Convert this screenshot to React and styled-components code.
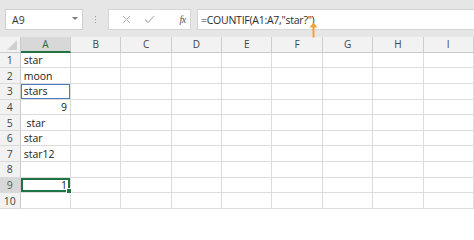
import React from 'react';
import styled, { createGlobalStyle } from 'styled-components';

const GlobalStyle = createGlobalStyle`
  html, body {
    margin: 0;
    padding: 0;
    background: #ffffff;
  }
  body {
    width: 474px;
    height: 209px;
    overflow: hidden;
    font-family: "Open Sans", "Noto Sans", Arial, sans-serif;
  }
`;

const COL_W = 50.37;
const ROW_H = 15.63;

const Window = styled.div`
  width: 474px;
  height: 209px;
  display: flex;
  flex-direction: column;
  overflow: hidden;
  position: relative;
`;

const Toolbar = styled.div`
  height: 37px;
  box-sizing: border-box;
  background: #e6e6e6;
  padding: 9px 0 7px 5px;
  display: flex;
  align-items: stretch;
`;

const NameBox = styled.div`
  width: 78px;
  box-sizing: border-box;
  background: #ffffff;
  border: 1px solid #cfcfcf;
  display: flex;
  align-items: center;
  justify-content: space-between;
  padding: 0 4px 0 6px;
  font-size: 10.5px;
  color: #333;
`;

const Caret = styled.span`
  width: 0;
  height: 0;
  border-left: 3px solid transparent;
  border-right: 3px solid transparent;
  border-top: 3px solid #7a7a7a;
  margin-bottom: 2px;
`;

const Grip = styled.div`
  width: 25px;
  display: flex;
  flex-direction: column;
  align-items: center;
  justify-content: center;
  gap: 2px;
`;

const GripDot = styled.span`
  width: 1px;
  height: 1px;
  background: #9a9a9a;
`;

const ButtonBox = styled.div`
  width: 83px;
  box-sizing: border-box;
  background: #ffffff;
  border: 1px solid #d6d6d6;
  display: flex;
  align-items: center;
  padding: 0 4px 0 9px;
`;

const BarButton = styled.span`
  width: ${p => p.w}px;
  display: flex;
  align-items: center;
  justify-content: center;
`;

const Fx = styled.span`
  margin-left: auto;
  font-family: "Liberation Serif", "DejaVu Serif", serif;
  font-style: italic;
  font-size: 10px;
  color: #555;
  letter-spacing: -0.3px;
`;

const FormulaInput = styled.div`
  flex: 1;
  margin-left: 6px;
  box-sizing: border-box;
  background: #ffffff;
  border: 1px solid #d6d6d6;
  border-right: none;
  display: flex;
  align-items: center;
  padding-left: 3px;
  font-size: 10.5px;
  letter-spacing: -0.25px;
  color: #2b2b2b;
  white-space: nowrap;
`;

const Sheet = styled.div`
  display: grid;
  grid-template-columns: 20.7px repeat(9, ${COL_W}px);
  grid-template-rows: 15.7px repeat(10, ${ROW_H}px);
  background: #ffffff;
`;

const Corner = styled.div`
  background: #f2f2f2;
  border-right: 1px solid #c9c9c9;
  border-bottom: 1px solid #c9c9c9;
  box-sizing: border-box;
  position: relative;
  &::after {
    content: '';
    position: absolute;
    right: 3px;
    bottom: 2px;
    width: 0;
    height: 0;
    border-left: 10px solid transparent;
    border-bottom: 10px solid #d0d0d0;
  }
`;

const ColHead = styled.div`
  box-sizing: border-box;
  background: ${p => (p.active ? '#d8d8d8' : '#f2f2f2')};
  border-right: 1px solid #cdcdcd;
  border-bottom: ${p => (p.active ? '2px solid #217346' : '1px solid #c9c9c9')};
  color: ${p => (p.active ? '#2f6447' : '#444')};
  font-size: 10px;
  display: flex;
  align-items: center;
  justify-content: center;
  padding-top: ${p => (p.active ? '1px' : '0')};
`;

const RowHead = styled.div`
  box-sizing: border-box;
  background: ${p => (p.active ? '#d8d8d8' : '#f2f2f2')};
  border-right: 1px solid #c9c9c9;
  border-bottom: 1px solid #dadada;
  color: ${p => (p.active ? '#4f5f55' : '#444')};
  font-size: 10.5px;
  display: flex;
  align-items: center;
  justify-content: center;
`;

const Cell = styled.div`
  box-sizing: border-box;
  border-right: 1px solid #dcdcdc;
  border-bottom: 1px solid #dcdcdc;
  font-size: 10.5px;
  color: #222;
  display: flex;
  align-items: center;
  justify-content: ${p => (p.num ? 'flex-end' : 'flex-start')};
  padding: 0 3px;
  white-space: pre;
  position: relative;
  box-shadow: ${p =>
    p.selected
      ? 'inset 0 0 0 2px #217346'
      : p.traced
      ? 'inset 0 0 0 1px #4f79c4'
      : 'none'};
`;

const FillHandle = styled.span`
  position: absolute;
  right: -2px;
  bottom: -2px;
  width: 4px;
  height: 4px;
  background: #217346;
  border: 1px solid #ffffff;
  z-index: 2;
`;

const ArrowMark = styled.svg`
  position: absolute;
  left: 309px;
  top: 22px;
`;

const columns = ['A', 'B', 'C', 'D', 'E', 'F', 'G', 'H', 'I'];

const values = {
  1: { text: 'star' },
  2: { text: 'moon' },
  3: { text: 'stars', traced: true },
  4: { text: '9', num: true },
  5: { text: ' star' },
  6: { text: 'star' },
  7: { text: 'star12' },
  8: { text: '' },
  9: { text: '1', num: true, selected: true },
  10: { text: '' },
};

const rows = [1, 2, 3, 4, 5, 6, 7, 8, 9, 10];

export default function App() {
  return (
    <>
      <GlobalStyle />
      <Window>
        <Toolbar>
          <NameBox>
            <span>A9</span>
            <Caret />
          </NameBox>
          <Grip>
            <GripDot />
            <GripDot />
            <GripDot />
          </Grip>
          <ButtonBox>
            <BarButton w={16}>
              <svg width="9" height="9" viewBox="0 0 9 9">
                <path d="M1 1 L8 8 M8 1 L1 8" stroke="#b4b4b4" strokeWidth="1" fill="none" />
              </svg>
            </BarButton>
            <BarButton w={30}>
              <svg width="11" height="9" viewBox="0 0 11 9">
                <path d="M1 4.5 L4 7.5 L10 1" stroke="#b4b4b4" strokeWidth="1.1" fill="none" />
              </svg>
            </BarButton>
            <Fx>fx</Fx>
          </ButtonBox>
          <FormulaInput>=COUNTIF(A1:A7,"star?")</FormulaInput>
        </Toolbar>
        <Sheet>
          <Corner />
          {columns.map(c => (
            <ColHead key={c} active={c === 'A'}>
              {c}
            </ColHead>
          ))}
          {rows.map(r => (
            <React.Fragment key={r}>
              <RowHead active={r === 9}>{r}</RowHead>
              <Cell
                num={values[r].num}
                traced={values[r].traced}
                selected={values[r].selected}
              >
                {values[r].text}
                {values[r].selected && <FillHandle />}
              </Cell>
              {columns.slice(1).map(c => (
                <Cell key={c} />
              ))}
            </React.Fragment>
          ))}
        </Sheet>
        <ArrowMark width="9" height="16" viewBox="0 0 9 16">
          <path d="M4.5 0.5 L8.5 5.5 L5.5 5.5 L5.5 15.5 L3.5 15.5 L3.5 5.5 L0.5 5.5 Z" fill="#f3a23a" />
        </ArrowMark>
      </Window>
    </>
  );
}
